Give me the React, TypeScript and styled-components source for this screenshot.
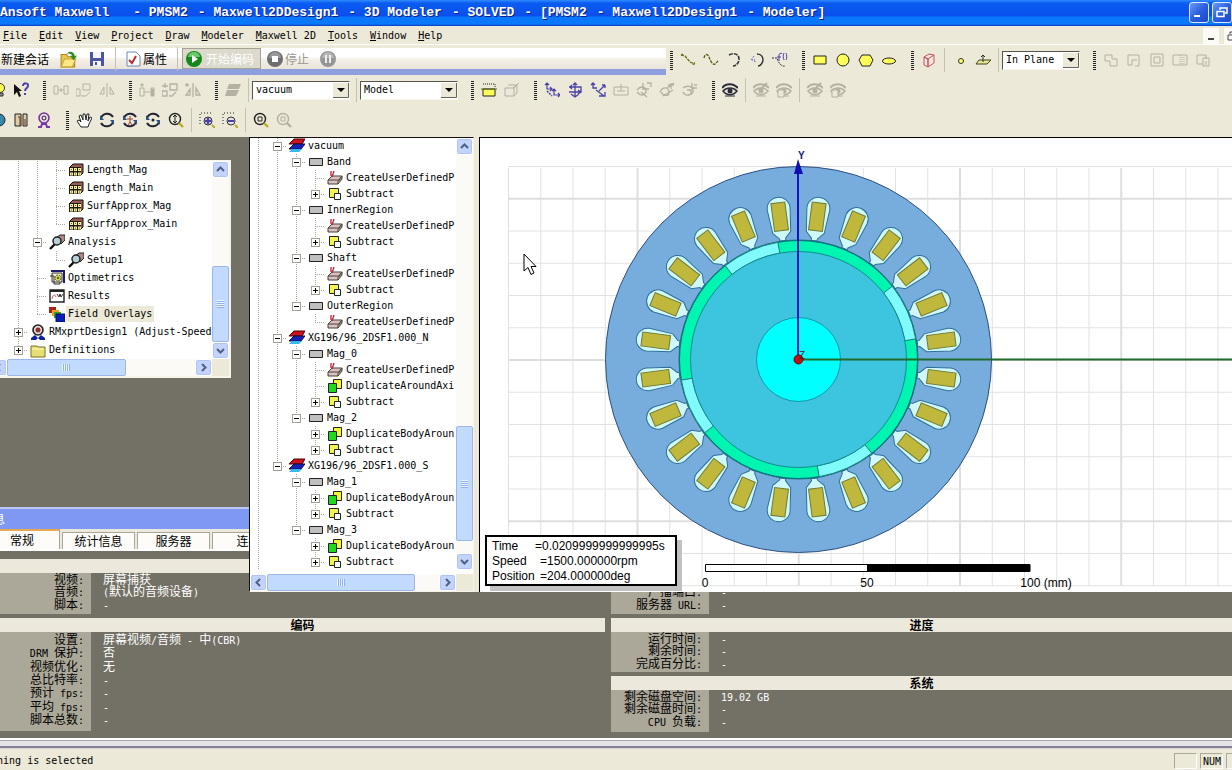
import React from "react";
import styled, { createGlobalStyle, css } from "styled-components";

const mono = `"DejaVu Sans Mono", "Noto Sans CJK SC", monospace`;
const cjk = `"Noto Sans CJK SC", sans-serif`;
const face = "#ece9d8";
const slate = "#737065";

const Global = createGlobalStyle`
  *, *::before, *::after { box-sizing: border-box; }
  body { margin: 0; background: ${face}; color: #000; font: 10px/12px ${mono}; overflow: hidden; }
  button, select { font: inherit; color: inherit; margin: 0; padding: 0; }
  button { background: none; border: 0; }
  ul, dl, dd { margin: 0; padding: 0; list-style: none; }
  svg { display: block; flex: none; }
`;

/* ---------- icons ---------- */

const G = "#b4b1a3";
const P = "#4b42a8";
const Y = "#ffff5a";

const magnifier = (
  <>
    <path d="M1 15l5-5" stroke="#111" strokeWidth="2.4" />
    <path d="M7 4l4-3h5v5l-4 4z" fill="#b08a8a" stroke="#222" />
    <circle cx="8" cy="7" r="4" fill="#b7d0d8" stroke="#222" strokeWidth="1.5" />
  </>
);
const rotate = (
  <>
    <path d="M2 6c2-5 9-6 12-1" stroke="#223" strokeWidth="2" />
    <path d="M14 10c-2 5-9 6-12 1" stroke="#223" strokeWidth="2" />
    <path d="M1 3v5h4zM15 13V8h-4z" fill="#2b5580" />
  </>
);
const eye = (c: string) => (
  <>
    <path d="M0 6c4-5 11-5 16 0" stroke={c} strokeWidth="2" />
    <path d="M1 9c4-4 10-4 14 0-4 5-10 5-14 0z" stroke={c} strokeWidth="1.5" />
    <circle cx="8" cy="9" r="2.5" fill={c} />
    <path d="M3 14h10" stroke={c} />
  </>
);
const zoomGlass = (c: string, tail: string) => (
  <>
    <circle cx="7" cy="7" r="5.5" stroke={c} strokeWidth="1.4" />
    <path d="M11 11l4 4" stroke={tail} strokeWidth="2.4" />
  </>
);
const axes = (
  <>
    <path d="M3 1v6h5M1 3l2-2 2 2M6 5l2 2-2 2" stroke={P} strokeWidth="1.2" />
    <path d="M10 7v6h6M8 9l2-2 2 2M14 11l2 2-2 2" stroke={P} strokeWidth="1.2" />
    <path d="M3 9l5 5" stroke={P} strokeWidth="1.6" strokeDasharray="2 1" />
  </>
);

const icons: Record<string, React.ReactNode> = {
  bulb: <><circle cx="10" cy="6" r="4.5" fill={Y} stroke="#333" /><path d="M9 11h4v3h-4z" fill="#888" stroke="#333" /></>,
  helpCursor: <><path d="M1 2l8 7H6l2 5-2 1-2-5-3 3z" fill="#111" /><path d="M10 4c0-4 6-3 5 0 0 2-3 2-3 5M12 11v2" stroke={P} strokeWidth="2" /></>,
  between: <path d="M1 4h4v8H1zM11 4h4v8h-4zM5 8h6M8 6v4" stroke={G} />,
  step: <path d="M0 7h4v7H0zM7 2h7v6H7zM5 14h5l4-4" stroke={G} />,
  mirror: <path d="M8 1v14M5 5L1 12h4zM11 5v7h4z" stroke={G} />,
  dupLine: <><path d="M1 6h4v8H1zM12 6h3v8h-3zM5 10h6M3 1v4M1 3h4" stroke={G} /><path d="M12 7h3v7h-3z" fill={G} /></>,
  dupStep: <path d="M0 9h5v5H0zM8 2h7v6H8zM3 1v5M0 4h6M7 14h3l4-4" stroke={G} strokeWidth="1.3" />,
  dupMirror: <path d="M8 1v14M5 7L1 13h4zM11 6v7h4zM2 1v4M0 3h4" stroke={G} strokeWidth="1.3" />,
  solids: <path d="M4 2h12l-2 5H2zM2 8h12l-3 6H0z" fill={G} />,
  section: <><path d="M2 2h12v4" stroke="#222" strokeDasharray="1 1" /><path d="M2 7h12v7H2z" fill={Y} stroke="#222" /><path d="M0 7h16" stroke="#5a6a10" /></>,
  sectionOff: <path d="M1 6h9v8H1zM4 3h9l-3 3M13 3v8l-3 3M9 6l6-5" stroke={G} />,
  axA: axes,
  axB: <path d="M8 1v14M2 5h12v5H2M5 3L3 5l2 2M11 8l3 2-3 2M6 3l2-2 2 2M4 12l4 3 4-3" stroke={P} strokeWidth="1.3" />,
  axC: <path d="M3 1v5h4M1 3l2-2 2 2M6 8l8 6M15 3l-6 6M15 3h-3M15 3v3M9 14h6v-4" stroke={P} strokeWidth="1.3" />,
  planeOff: <path d="M1 5h14v8H1zM4 9h8M8 2v7" stroke={G} />,
  csOff: <path d="M1 8c4-5 9-3 9 1s-5 6-9 1M7 1v6h6M11 1h4v4M5 10l6 5" stroke={G} strokeWidth="1.3" />,
  csOff2: <path d="M1 10c3-6 8-5 9 0s-6 4-8 0M8 6l7-5M12 1v6M9 3h6M4 14L14 8" stroke={G} strokeWidth="1.3" />,
  csOff3: <path d="M1 6c4-3 9-2 10 2s-7 8-10 2M5 8h4v5M10 1v5h5M12 3h3" stroke={G} strokeWidth="1.4" />,
  eye: eye("#2c2c38"),
  eyeOff: <>{eye(G)}<path d="M7 8l7-7M5 6l4 4" stroke={G} strokeWidth="2" /></>,
  eyeBox: <>{eye(G)}<path d="M2 8h6v7H2z" fill={face} stroke={G} /></>,
  line: <path d="M1 3l4 1 5 6 5 2M1 3l2-1M13 13l2-3" stroke="#6d6a12" strokeWidth="1.3" strokeDasharray="3 1" />,
  spline: <path d="M1 6c1-5 4-4 5-1s4 9 6 7l3-3" stroke="#5c5916" strokeWidth="1.3" strokeDasharray="3 1" />,
  arc: <path d="M3 3c6-3 10 0 10 4s-3 7-6 7" stroke="#333" strokeWidth="1.6" strokeDasharray="4 1" />,
  arcC: <><path d="M8 2c5 0 6 4 6 6s-2 6-5 6" stroke="#333" strokeWidth="1.4" /><path d="M5 4L2 8h4v2" stroke={P} strokeDasharray="1 1" /></>,
  func: <><path d="M0 6h5c1 4 4 9 8 8" stroke="#333" strokeDasharray="2 1" /><path d="M7 9V3c0-2 3-2 3-1M5 5h4M12 1c-1 2-1 5 0 7M14 1c1 2 1 5 0 7" stroke={P} /></>,
  rect: <path d="M2 4h12v8H2z" fill={Y} stroke="#222" />,
  circle: <circle cx="8" cy="8" r="6" fill={Y} stroke="#222" />,
  hexagon: <path d="M4 3h8l3 5-3 6H4L1 8z" fill={Y} stroke="#222" />,
  ellipse: <ellipse cx="8" cy="9" rx="6.5" ry="3" fill={Y} stroke="#222" />,
  box: <path d="M3 5v8l4 2V7zM3 5l5-3 5 1v8l-6 4V7l6-4M7 7L3 5" stroke="#c8505e" fill="#f6e8e0" />,
  point: <circle cx="9" cy="9" r="2.5" fill={Y} stroke="#333" />,
  plane: <><path d="M4 8h12l-4 4H1z" stroke="#444418" fill="#e8e69a" /><path d="M8 3v7M6 5l2-2 2 2" stroke="#333" /></>,
  unite: <path d="M2 3h7v4h5v7H7V9H2z" stroke={G} />,
  minus: <path d="M2 3h11v11H9M2 3v10h4V8h5" stroke={G} />,
  inter: <path d="M2 2h12v12H2zM5 5h6v6H5z" stroke={G} />,
  split: <><path d="M1 3h14v10H1z" stroke={G} /><path d="M8 3v10M10 5v7M12 5v7" stroke={G} strokeDasharray="1 1" /></>,
  imprint: <path d="M2 3h9v4M2 3v9h6M8 6h6v8H8zM11 9v4" stroke={G} />,
  globe: <><circle cx="9" cy="8" r="6" fill="#3a86a8" stroke="#123" /><path d="M9 3v10" stroke="#9ee" /></>,
  panels: <><path d="M2 2h6v12H2zM10 2h4v12h-4z" stroke="#222" fill="#d8cda4" /><path d="M5 5h2v9M12 7v6" stroke="#703020" /></>,
  user: <><circle cx="8" cy="6" r="5" fill="#f0d8f0" stroke="#703a90" strokeWidth="1.6" /><circle cx="8" cy="6" r="2" stroke="#222" /><path d="M2 15h3l1-3h4l1 3h3" stroke="#7838a8" strokeWidth="2" /></>,
  hand: <path d="M5 15L1 9l2-1 2 2-2-6 2-1 2 5V2h2l1 6 1-6h2l-1 7 2-4 2 1-3 6-1 3z" fill="#fff" stroke="#222" />,
  rotate,
  rotateMan: <>{rotate}<path d="M8 4v6M5 7h6M6 13l2-3 2 3" stroke="#a04030" /></>,
  rotateDot: <>{rotate}<circle cx="8" cy="8" r="1.5" fill="#223" /></>,
  zoomY: <>{zoomGlass("#222", "#b5ad22")}<path d="M7 3v8M5 5l2-2 2 2M5 9l2 2 2-2" stroke="#222" /></>,
  zoomIn: <><path d="M1 12V1h11" stroke="#222" strokeDasharray="1 2" /><circle cx="9" cy="9" r="4" fill="#c9c5ea" stroke="#333" /><path d="M9 6v6M6 9h6" stroke={P} strokeWidth="2" /><path d="M13 13l3 3" stroke="#b5ad22" strokeWidth="2" /></>,
  zoomOut: <><path d="M1 12V1h11" stroke="#222" strokeDasharray="1 2" /><circle cx="9" cy="9" r="4" fill="#e6dff0" stroke="#333" /><path d="M6 9h6" stroke={P} strokeWidth="2" /><path d="M13 13l3 3" stroke="#b5ad22" strokeWidth="2" /></>,
  fit: <>{zoomGlass("#222", "#b5ad22")}<path d="M5 5h4v4H5z" stroke="#222" /></>,
  fitOff: <>{zoomGlass(G, G)}<path d="M5 5h4v4H5z" stroke={G} /></>,
  open: <><path d="M1 4h5l1 2h6v9H1z" fill="#e9c94c" stroke="#b08a20" /><path d="M1 15l3-7h10l-3 7z" fill="#fbe88a" stroke="#c8a838" /><path d="M6 3c3-3 7-1 7 2h2l-3 4-3-4h2c-1-2-3-2-5-2z" fill="#2c8a2a" /></>,
  save: <><path d="M1 1h14v14H1z" fill="#4a55a5" /><path d="M4 1h8v6H4zM4 10h8v5H4z" fill="#f4f4fa" /><path d="M6 11h2v3H6z" fill="#4a55a5" /></>,
  doc: <><path d="M2 1h9l4 4v10H2z" fill="#fff" stroke="#6a86b8" /><path d="M4 9l3 3 4-7" stroke="#b83030" strokeWidth="2" /></>,
  play: <><circle cx="8" cy="8" r="8" fill="#16881b" /><path d="M2 6a6 5 0 0 1 12 0z" fill="#6cc86a" /><path d="M6 4l6 4-6 4z" fill="#fff" /></>,
  stop: <><circle cx="8" cy="8" r="8" fill="#6e6e6e" /><path d="M2 7a6 6 0 0 1 12 0z" fill="#989898" /><path d="M5 5h6v6H5z" fill="#fff" /></>,
  pause: <><circle cx="8" cy="8" r="8" fill="#969696" /><path d="M2 7a6 6 0 0 1 12 0z" fill="#b4b4b4" /><path d="M6 4v8M10 4v8" stroke="#eee" strokeWidth="2" /></>,
  vars: (
    <>
      <path d="M2 5l3-3h10v9l-2 2z" fill="#9a5a50" stroke="#111" />
      <path d="M1 5h12v9H1z" fill="#1c1a10" />
      {[2, 6, 10].map((x) => [6, 10.5].map((y) => (
        <g key={`${x}-${y}`}><rect x={x} y={y} width="3" height="3" fill="#f6efa4" /><rect x={x + 1} y={y + 1} width="1" height="1" fill="#6a5a20" /></g>
      )))}
    </>
  ),
  analysis: magnifier,
  setup: magnifier,
  optim: <><path d="M2 1h13v12" stroke="#1b1b6a" strokeWidth="2" /><path d="M3 3h10v9H3zM1 6h4v8h6v-2" fill="#f3f0d0" stroke="#333" /><circle cx="9" cy="8" r="3" fill="#d8d840" stroke="#555" strokeDasharray="2 1" /><circle cx="9" cy="8" r="1" fill="#333" /></>,
  results: <><path d="M1 2h14v12H1z" fill="#fff" stroke="#222" strokeWidth="1.4" /><path d="M1 3h14" stroke="#222" strokeWidth="2" /><path d="M3 11c1-5 3-5 4-2" stroke="#c05050" /><path d="M8 6l2 3 1-3 1 3 2-3" stroke="#333" /></>,
  overlays: <><path d="M0 1h7v6H0z" fill="#b02010" /><path d="M3 4h7v6H3z" fill="#e8a020" /><path d="M5 6h7v6H5z" fill="#30a030" /><path d="M7 8h9v8H7z" fill="#0a20b8" stroke="#051060" /></>,
  design: <><circle cx="8" cy="6" r="5" fill="#e8d8d8" stroke="#222" strokeWidth="1.6" /><circle cx="8" cy="6" r="2.5" fill="#8a3030" /><path d="M1 16v-2l4-3 3 3 3-3 4 3v2h-5l-2-2-2 2z" fill="#10209a" /></>,
  folder: <><path d="M1 4h6l1 1h7v10H1z" fill="#e6e070" stroke="#77722a" /><path d="M2 7h12" stroke="#fffcc0" /></>,
  material: <><path d="M5 1h11l-3 5H0z" fill="#d01020" stroke="#400" /><path d="M5 6h11l-4 5H0z" fill="#1a20c0" stroke="#113" /><path d="M3 11h10l-3 3H0z" fill="#38b8f0" /></>,
  body: <path d="M1.500 4.500h13v7H1.500z" fill="#c0c0c0" stroke="#222" />,
  create: <><path d="M1 10l4-4h10l-4 5v3H1zM1 10h10" fill="#d8c0c4" stroke="#443" /><path d="M11 11l4-5v3l-4 5" fill="#a08888" stroke="#443" /><path d="M4 1v5M7 1L5 7" stroke="#c03040" strokeWidth="1.4" /></>,
  subtract: <><path d="M2.500 2.500h9v9H2.500z" fill="#f4f450" stroke="#222" /><path d="M7.500 7.500h6v6H7.500z" fill="#fff" stroke="#222" /></>,
  duplicate: <><path d="M6.500 1.500h8v9H6.500z" fill="#f4f430" stroke="#222" /><path d="M1.500 5.500h8v9H1.500z" fill="#20d820" stroke="#222" /></>,
};

const Icon = ({ name, size = 16 }: { name: string; size?: number }) => (
  <svg width={size} height={size} viewBox="0 0 16 16" fill="none" aria-hidden="true">
    {icons[name]}
  </svg>
);

/* ---------- frame ---------- */

const Page = styled.div`
  display: flex;
  flex-direction: column;
  min-height: 100vh;
  overflow: hidden;
`;

const TitleBar = styled.header`
  display: flex;
  align-items: center;
  gap: 10px;
  height: 26px;
  color: #fff;
  font: bold 13px/26px "Liberation Mono", monospace;
  white-space: nowrap;
  text-shadow: 1px 1px 0 #0a2080;
  background: linear-gradient(#2f8bff 0, #0a5cf0 12%, #0a4fee 60%, #0a78fb 66%, #0a78fb 92%, #0a3cc0 100%);
`;
const AppName = styled.span`
  padding-right: 14px;
`;
const WindowButtons = styled.div`
  display: flex;
  gap: 3px;
  margin: 0 0 2px auto;
`;
const WindowButton = styled.button`
  display: grid;
  place-items: center;
  width: 20px;
  height: 21px;
  border: 1px solid #dfe8ff;
  border-radius: 3px;
  background: linear-gradient(135deg, #6f9af5, #2a5fe0 50%, #1a4ac8);
`;

const MenuBar = styled.nav`
  display: flex;
  align-items: center;
  gap: 12px;
  height: 19px;
  padding: 1px 0 0 3px;
  border-bottom: 1px solid #fff;
`;
const MenuItem = styled.button`
  &::first-letter {
    text-decoration: underline;
  }
`;
const ChildButtons = styled.div`
  display: flex;
  gap: 5px;
  margin: 0 -8px 0 auto;
`;
const ChildButton = styled.button`
  display: grid;
  place-items: center;
  width: 16px;
  height: 16px;
  background: #fbfaf5;
`;

/* ---------- toolbars ---------- */

const Toolbars = styled.div`
  padding-bottom: 2px;
`;
const ToolRow = styled.div<{ $bleed?: boolean }>`
  display: flex;
  align-items: center;
  height: 30px;
  margin-left: ${(p) => (p.$bleed ? "-14px" : "0")};
`;
const ToolButton = styled.button`
  display: grid;
  place-items: center;
  flex: none;
  width: 23px;
  height: 23px;
`;
const Grip = styled.span<{ $near?: boolean }>`
  flex: none;
  width: 3px;
  height: 19px;
  margin: 0 3px 0 ${(p) => (p.$near ? "4px" : "11px")};
  background: repeating-linear-gradient(#222 0 1px, transparent 1px 2px);
`;
const Divider = styled.span`
  flex: none;
  width: 1px;
  height: 24px;
  margin: 0 3px 0 4px;
  background: #c5c2b2;
`;
const SelectBox = styled.span<{ $width: number }>`
  position: relative;
  flex: none;
  width: ${(p) => p.$width}px;
  height: 19px;
  margin-right: 2px;
  select {
    appearance: none;
    width: 100%;
    height: 100%;
    padding-left: 3px;
    border: 1px solid;
    border-color: #55534a #f8f6ec #f8f6ec #55534a;
    border-radius: 0;
    background: #fff;
  }
  svg {
    position: absolute;
    top: 2px;
    right: 1px;
    pointer-events: none;
  }
`;

const Choice = ({ label, value, width }: { label: string; value: string; width: number }) => (
  <SelectBox $width={width}>
    <select aria-label={label} defaultValue={value}>
      <option>{value}</option>
    </select>
    <svg width="16" height="15" aria-hidden="true">
      <path d="M0 0h16v15H0z" fill={face} />
      <path d="M0 14.500h15.500V0" fill="none" stroke="#66645a" />
      <path d="M4 5h8l-4 4z" fill="#000" />
    </svg>
  </SelectBox>
);

const Tools = ({ names }: { names: string[] }) => (
  <>
    {names.map((n, i) =>
      n === "|" ? <Divider key={i} /> : n === "::" ? <Grip key={i} /> : (
        <ToolButton key={i} aria-label={n}><Icon name={n} /></ToolButton>
      )
    )}
  </>
);

const SessionBar = styled.div`
  display: flex;
  align-items: center;
  align-self: flex-end;
  gap: 1px;
  flex: none;
  width: 666px;
  height: 27px;
  font: 12px/18px ${cjk};
  border-bottom: 6px solid #8e9fdf;
  background: linear-gradient(#fff 0 40%, #f3efe6 55%, #e9e4da 100%);
`;
const SessionButton = styled.button<{ $disabled?: boolean }>`
  display: flex;
  align-items: center;
  gap: 2px;
  height: 20px;
  padding: 0 5px;
  white-space: nowrap;
  color: ${(p) => (p.$disabled ? "#9b988c" : "#000")};
  &:first-child {
    padding-left: 1px;
  }
`;
const StartButton = styled(SessionButton)`
  width: 79px;
  height: 21px;
  padding: 0 3px;
  gap: 4px;
  color: #fff;
  border: 1px solid #a5a296;
  background: #dcd9cd;
`;

/* ---------- scroll bars ---------- */

const Track = styled.div<{ $dir: "row" | "column" }>`
  display: flex;
  flex-direction: ${(p) => p.$dir};
  flex: none;
  ${(p) => (p.$dir === "row" ? "height: 17px;" : "width: 17px;")}
  background: #fbfaf6;
`;
const Arrow = styled.button`
  display: grid;
  place-items: center;
  flex: none;
  width: 17px;
  height: 17px;
  border: 1px solid #fff;
  border-radius: 3px;
  background: #c3d3fb;
  box-shadow: inset 0 0 0 1px #b0c4f2;
`;
const Space = styled.span<{ $grow: number }>`
  flex: ${(p) => p.$grow} 1 0;
`;
const Thumb = styled.span<{ $grow: number; $dir: "row" | "column" }>`
  display: grid;
  place-items: center;
  flex: ${(p) => p.$grow} 1 0;
  border: 1px solid #9db6ea;
  border-radius: 2px;
  background: #c2dafd;
  &::after {
    content: "";
    ${(p) =>
      p.$dir === "row"
        ? css`width: 8px; height: 7px; background: repeating-linear-gradient(90deg, #eef4fe 0 1px, #8cb0f0 1px 2px);`
        : css`width: 7px; height: 8px; background: repeating-linear-gradient(#eef4fe 0 1px, #8cb0f0 1px 2px);`}
  }
`;
const turns = { left: 0, up: 90, right: 180, down: 270 };
const Chevron = ({ to }: { to: keyof typeof turns }) => (
  <Arrow aria-label={`Scroll ${to}`}>
    <svg width="9" height="9" viewBox="0 0 9 9" aria-hidden="true">
      <path d="M6 1L2.500 4.500 6 8" fill="none" stroke="#4d6185" strokeWidth="2" transform={`rotate(${turns[to]} 4.500 4.500)`} />
    </svg>
  </Arrow>
);
const ScrollBar = ({ dir, parts }: { dir: "row" | "column"; parts: [number, number, number] }) => (
  <Track $dir={dir}>
    <Chevron to={dir === "row" ? "left" : "up"} />
    <Space $grow={parts[0]} />
    <Thumb $dir={dir} $grow={parts[1]} />
    <Space $grow={parts[2]} />
    <Chevron to={dir === "row" ? "right" : "down"} />
  </Track>
);

/* ---------- trees ---------- */

const List = styled.ul`
  flex: 1;
  min-width: 0;
  overflow: hidden;
`;
const Node = styled.li<{ $height: number }>`
  display: flex;
  align-items: center;
  height: ${(p) => p.$height}px;
  white-space: nowrap;
`;
const Rail = styled.span<{ $kind: string }>`
  display: grid;
  place-items: center;
  flex: none;
  width: 19px;
  height: 100%;
  ${(p) => {
    const v = "repeating-linear-gradient(#aaa79c 0 1px, transparent 1px 2px)";
    const h = "repeating-linear-gradient(90deg, #aaa79c 0 1px, transparent 1px 2px)";
    if (p.$kind === " ") return "";
    if (p.$kind === "|") return `background: ${v} 9px 0 / 1px 100% no-repeat;`;
    const half = p.$kind === "L" || p.$kind === "p";
    return `background: ${v} 9px 0 / 1px ${half ? "50%" : "100%"} no-repeat, ${h} 9px 50% / 10px 1px no-repeat;`;
  }}
`;
const Expander = styled.button`
  width: 9px;
  height: 9px;
  border: 1px solid #a3a095;
  background: #fff;
`;
const NodeIcon = styled.span`
  display: grid;
  place-items: center;
  flex: none;
  width: 19px;
`;
const NodeLabel = styled.span<{ $on?: boolean }>`
  padding: 2px 2px;
  background: ${(p) => (p.$on ? "#ece9d8" : "none")};
`;

type Row = [rails: string, icon: string, label: string, on?: boolean];

/* Rails: "|" line, " " gap, T tee, L last, + / - expander, p = "+" on a last child, m = "-" on a last child */
const Tree = ({ rows, height, label }: { rows: Row[]; height: number; label: string }) => (
  <List aria-label={label}>
    {rows.map(([rails, icon, text, on], i) => (
      <Node key={i} $height={height}>
        {rails.split("").map((k, j) => (
          <Rail key={j} $kind={k === "m" ? "p" : k}>
            {"+-pm".includes(k) && (
              <Expander aria-label={"+p".includes(k) ? "Expand" : "Collapse"}>
                <svg width="7" height="7" aria-hidden="true">
                  <path d={"+p".includes(k) ? "M1 3.500h5M3.500 1v5" : "M1 3.500h5"} stroke="#000" />
                </svg>
              </Expander>
            )}
          </Rail>
        ))}
        <NodeIcon><Icon name={icon} /></NodeIcon>
        <NodeLabel $on={on}>{text}</NodeLabel>
      </Node>
    ))}
  </List>
);

const projectRows: Row[] = [
  ["||T", "vars", "Length_Mag"],
  ["||T", "vars", "Length_Main"],
  ["||T", "vars", "SurfApprox_Mag"],
  ["||L", "vars", "SurfApprox_Main"],
  ["|-", "analysis", "Analysis"],
  ["||L", "setup", "Setup1"],
  ["|T", "optim", "Optimetrics"],
  ["|T", "results", "Results"],
  ["|L", "overlays", "Field Overlays", true],
  ["+", "design", "RMxprtDesign1 (Adjust-Speed"],
  ["p", "folder", "Definitions"],
];

const modelRows: Row[] = [
  ["|-", "material", "vacuum"],
  ["||-", "body", "Band"],
  ["|||T", "create", "CreateUserDefinedP"],
  ["|||p", "subtract", "Subtract"],
  ["||-", "body", "InnerRegion"],
  ["|||T", "create", "CreateUserDefinedP"],
  ["|||p", "subtract", "Subtract"],
  ["||-", "body", "Shaft"],
  ["|||T", "create", "CreateUserDefinedP"],
  ["|||p", "subtract", "Subtract"],
  ["||m", "body", "OuterRegion"],
  ["|| L", "create", "CreateUserDefinedP"],
  ["|-", "material", "XG196/96_2DSF1.000_N"],
  ["||-", "body", "Mag_0"],
  ["|||T", "create", "CreateUserDefinedP"],
  ["|||T", "duplicate", "DuplicateAroundAxi"],
  ["|||p", "subtract", "Subtract"],
  ["||m", "body", "Mag_2"],
  ["|| +", "duplicate", "DuplicateBodyAroun"],
  ["|| p", "subtract", "Subtract"],
  ["|m", "material", "XG196/96_2DSF1.000_S"],
  ["| -", "body", "Mag_1"],
  ["| |+", "duplicate", "DuplicateBodyAroun"],
  ["| |p", "subtract", "Subtract"],
  ["| m", "body", "Mag_3"],
  ["|  +", "duplicate", "DuplicateBodyAroun"],
  ["|  p", "subtract", "Subtract"],
];

/* ---------- workspace ---------- */

const Desktop = styled.div`
  display: grid;
  grid-template-columns: minmax(0, 1fr);
  flex: 1;
  background: ${slate};
`;
const Workspace = styled.main`
  display: flex;
  grid-area: 1 / 1;
  align-self: start;
  z-index: 1;
  pointer-events: none;
  & > * {
    pointer-events: auto;
  }
`;
const ProjectDock = styled.section`
  align-self: flex-start;
  flex: none;
  width: 231px;
  margin: 23px 18px 0 0;
  border: solid #f6f4ea;
  border-width: 1px 2px 2px 0;
  background: #fff;
`;
const Split = styled.div`
  display: flex;
`;
const ProjectPane = styled(Split)`
  & > ul {
    padding-left: 9px;
  }
`;
const HorizontalEdge = styled.div<{ $bleed?: boolean }>`
  display: grid;
  grid-template-columns: minmax(0, 1fr) 17px;
  margin-left: ${(p) => (p.$bleed ? "-10px" : "0")};
  background: ${face};
`;
const ModelDock = styled.section`
  flex: none;
  width: 225px;
  border: 1px solid #111;
  border-right-color: #f6f4ea;
  border-bottom-color: #f6f4ea;
  background: #fff;
`;
const ModelPane = styled(Split)`
  padding-bottom: 4px;
  & > ul {
    margin-left: -1px;
  }
`;
const Viewport = styled.section`
  position: relative;
  flex: 1;
  min-width: 0;
  border: solid #000;
  border-width: 1px 0 0 1px;
  background: #fff;
  box-shadow: -5px 0 0 ${face};
  margin-left: 5px;
`;
const Scene = styled.svg`
  width: 100%;
  height: 100%;
  font: 12px "Liberation Sans", sans-serif;
`;
const InfoBox = styled.dl`
  position: absolute;
  left: 5px;
  bottom: 6px;
  width: 192px;
  padding: 2px 5px 0;
  border: 2px solid #000;
  background: #fff;
  box-shadow: 5px 5px 0 #c2c2c2;
  font: 12px/15px "Liberation Sans", sans-serif;
  div {
    display: flex;
    white-space: pre;
  }
`;
const Term = styled.dt<{ $short?: boolean }>`
  width: ${(p) => (p.$short ? 43 : 48)}px;
`;

const CX = 318.5;
const CY = 221.5;
const polar = (r: number, deg: number) => {
  const a = (deg * Math.PI) / 180;
  return `${(r * Math.sin(a)).toFixed(2)} ${(-r * Math.cos(a)).toFixed(2)}`;
};
const sector = (a: number, b: number) =>
  `M${polar(119, a)}A119 119 0 0 1 ${polar(119, b)}L${polar(108, b)}A108 108 0 0 0 ${polar(108, a)}z`;

const Motor = () => (
  <g transform={`translate(${CX} ${CY})`} strokeWidth="1">
    <circle r="193" fill="#76addc" stroke="#2d4f80" />
    {Array.from({ length: 24 }, (_, i) => (
      <g key={i} transform={`rotate(${7.5 + i * 15})`}>
        <path d="M-3-120V-122L-9-128-11.500-152A11.500 11.500 0 0 1 11.500-152L9-128 3-122V-120z" fill="#cff8f8" stroke="#2f6f9c" />
        <path d="M-7-158H7V-130H-7z" fill="#bfb83c" stroke="#6e7a35" />
      </g>
    ))}
    <circle r="120" fill="#15737f" />
    <circle r="119" fill="#00f5b0" stroke="#0f6f80" />
    {[-38, 52, 142, 232].map((a) => (
      <path key={a} d={sector(a, a + 28)} fill="#80fbfb" stroke="#1c7c80" />
    ))}
    <circle r="108" fill="#3dc4df" stroke="#168a90" />
    <circle r="42" fill="#00ffff" stroke="#1697a8" />
  </g>
);

const Drawing = () => (
  <Scene role="img" aria-label="Motor cross section">
    {Array.from({ length: 50 }, (_, i) => (
      <line key={`v${i}`} x1={28.5 + i * 32.25} x2={28.5 + i * 32.25} y1="30" y2="448"
        stroke={i % 5 === 4 ? "#dedede" : "#e2e2e2"} strokeWidth={i % 5 === 4 ? 2 : 1} />
    ))}
    {Array.from({ length: 14 }, (_, i) => (
      <line key={`h${i}`} x1="28" x2="100%" y1={28.5 + i * 32.25} y2={28.5 + i * 32.25}
        stroke={i % 5 === 1 ? "#dedede" : "#e2e2e2"} strokeWidth={i % 5 === 1 ? 2 : 1} />
    ))}
    <Motor />
    <line x1={CX} x2="100%" y1={CY} y2={CY} stroke="#1f6b2c" strokeWidth="2" />
    <path d={`M318 ${CY}V34`} stroke="#1414c4" strokeWidth="2" />
    <path d="M318 21L314 36h9z" fill="#1010b0" />
    <text x="318" y="21" fill="#14147a" fontSize="10" fontWeight="bold">Y</text>
    <circle cx={CX} cy={CY} r="4.500" fill="#b81414" stroke="#601010" />
    <text x="319" y="221" fill="#5a1020" fontSize="10">Z</text>
    <path d="M44 116V133L48 129.500 51 136.500 54 135 51 128.500H56z" fill="#fff" stroke="#000" />
    <path d="M225.500 426.500H550V433.500H225.500z" fill="#fff" stroke="#000" />
    <path d="M387 426H550V434H387z" fill="#000" />
    <g textAnchor="middle">
      <text x="225" y="449">0</text>
      <text x="387" y="449">50</text>
      <text x="566" y="449">100 (mm)</text>
    </g>
  </Scene>
);

/* ---------- encoder window ---------- */

const Encoder = styled.section`
  grid-area: 1 / 1;
  padding-top: 370px;
  font: 12px/12px ${cjk};
`;
const EncoderTitle = styled.div`
  height: 22px;
  color: #fff;
  line-height: 20px;
  border-top: 2px solid #b9c6f4;
  background: #7f98f4;
  span {
    margin-left: -19px;
  }
`;
const Tabs = styled.div`
  display: flex;
  gap: 2px;
  align-items: flex-end;
  height: 22px;
  border-bottom: 2px solid #fff;
  background: #ebe8dd;
`;
const Tab = styled.button<{ $on?: boolean }>`
  height: ${(p) => (p.$on ? 20 : 17)}px;
  width: ${(p) => (p.$on ? 80 : 73)}px;
  margin-left: ${(p) => (p.$on ? "-20px" : "0")};
  padding-left: ${(p) => (p.$on ? "4px" : "0")};
  line-height: 14px;
  border: 1px solid #a9a69a;
  border-bottom: 0;
  border-top: ${(p) => (p.$on ? "2px solid #e8a850" : "1px solid #a9a69a")};
  background: #fdfcf9;
`;
const Columns = styled.div`
  display: grid;
  grid-template-columns: 605px minmax(0, 1fr);
  gap: 6px;
  padding: 8px 0 6px;
`;
const Stack = styled.div`
  display: flex;
  flex-direction: column;
  gap: 4px;
`;
const Heading = styled.h2`
  height: 14px;
  margin: 0;
  font: bold 12px/14px ${cjk};
  text-align: center;
  background: #ece8db;
`;
const Facts = styled.dl<{ $label: number; $height: number; $end: number }>`
  display: grid;
  grid-auto-rows: minmax(0, 1fr);
  height: ${(p) => p.$height}px;
  padding: 0 0 ${(p) => p.$end}px;
  background: linear-gradient(90deg, #aca899 ${(p) => p.$label}px, transparent ${(p) => p.$label}px);
  div {
    display: grid;
    grid-template-columns: ${(p) => p.$label}px minmax(0, 1fr);
    align-items: center;
    white-space: pre;
  }
  dt,
  dd {
    height: 12px;
  }
  dt {
    padding-right: 7px;
    text-align: right;
  }
  dd {
    padding-left: 12px;
    color: #fff;
  }
`;
const Latin = styled.span`
  font: 10px/10px ${mono};
`;

const mixed = (s: string) =>
  s.split(/([\x20-\x7e]+)/).filter(Boolean).map((t, i) => (/^[\x20-\x7e]/.test(t) ? <Latin key={i}>{t}</Latin> : t));

const Panel = ({ title, rows, label, height, end }: {
  title?: string; rows: [string, string][]; label: number; height: number; end: number;
}) => (
  <section>
    <Heading>{title}</Heading>
    <Facts $label={label} $height={height} $end={end}>
      {rows.map(([k, v]) => (
        <div key={k}><dt>{mixed(k)}</dt><dd>{mixed(v)}</dd></div>
      ))}
    </Facts>
  </section>
);

/* ---------- status bar ---------- */

const StatusBar = styled.footer`
  display: flex;
  align-items: center;
  justify-content: space-between;
  height: 32px;
  padding-top: 14px;
  background: linear-gradient(#fff 0 2px, #a9a4a8 2px 3px, #e6e3e6 3px 8px, #85809a 8px 10px, #d8d5d0 10px 11px, ${face} 11px);
  p {
    margin: 0 0 0 -21px;
  }
`;
const Cells = styled.div`
  display: flex;
  gap: 3px;
  margin-right: -17px;
`;
const Cell = styled.span`
  width: 23px;
  height: 16px;
  padding: 2px;
  border: 1px solid;
  border-color: #aca899 #fff #fff #aca899;
`;

export default function App() {
  return (
    <Page>
      <Global />
      <TitleBar>
        <AppName>Ansoft Maxwell</AppName>
        {["- PMSM2", "- Maxwell2DDesign1", "- 3D Modeler", "- SOLVED", "- [PMSM2", "- Maxwell2DDesign1", "- Modeler]"].map((t, i) => (
          <span key={i}>{t}</span>
        ))}
        <WindowButtons>
          <WindowButton aria-label="Minimize">
            <svg width="12" height="12"><path d="M1 9h6v2H1z" fill="#fff" /></svg>
          </WindowButton>
          <WindowButton aria-label="Restore">
            <svg width="12" height="12" fill="none" stroke="#fff"><path d="M4 4V2h7v5H9M1 5.500h7v5H1z" strokeWidth="1.500" /></svg>
          </WindowButton>
        </WindowButtons>
      </TitleBar>
      <MenuBar>
        {["File", "Edit", "View", "Project", "Draw", "Modeler", "Maxwell 2D", "Tools", "Window", "Help"].map((m) => (
          <MenuItem key={m}>{m}</MenuItem>
        ))}
        <ChildButtons>
          <ChildButton aria-label="Minimize document">
            <svg width="10" height="10"><path d="M2 7h6v2H2z" fill="#444" /></svg>
          </ChildButton>
          <ChildButton aria-label="Restore document">
            <svg width="10" height="10" fill="none" stroke="#444"><path d="M3 3V1h6v5H7M1 4h6v5H1z" /></svg>
          </ChildButton>
        </ChildButtons>
      </MenuBar>

      <Toolbars>
        <ToolRow>
          <SessionBar>
            <SessionButton>新建会话</SessionButton>
            <SessionButton aria-label="打开"><Icon name="open" size={18} /></SessionButton>
            <SessionButton aria-label="保存"><Icon name="save" /></SessionButton>
            <Divider />
            <SessionButton><Icon name="doc" />属性</SessionButton>
            <Divider />
            <StartButton><Icon name="play" />开始编码</StartButton>
            <SessionButton $disabled><Icon name="stop" />停止</SessionButton>
            <SessionButton $disabled aria-label="暂停"><Icon name="pause" /></SessionButton>
          </SessionBar>
          <Grip $near />
          <Tools names={["line", "spline", "arc", "arcC", "func", "::", "rect", "circle", "hexagon", "ellipse", "::", "box", "|", "point", "plane", "|"]} />
          <Choice label="Movement mode" value="In Plane" width={78} />
          <Tools names={["::", "unite", "minus", "inter", "split", "imprint"]} />
        </ToolRow>
        <ToolRow $bleed>
          <Tools names={["bulb", "helpCursor", "::", "between", "step", "mirror", "::", "dupLine", "dupStep", "dupMirror", "::", "solids", "|"]} />
          <Choice label="Material" value="vacuum" width={98} />
          <Divider />
          <Choice label="Model type" value="Model" width={98} />
          <Tools names={["::", "section", "sectionOff", "::", "axA", "axB", "axC", "planeOff", "csOff", "csOff2", "csOff3", "::", "eye", "|", "eyeOff", "eyeBox", "|", "eyeOff", "eyeBox"]} />
        </ToolRow>
        <ToolRow $bleed>
          <Tools names={["globe", "panels", "user", "::", "hand", "rotate", "rotateMan", "rotateDot", "zoomY", "|", "zoomIn", "zoomOut", "|", "fit", "fitOff"]} />
        </ToolRow>
      </Toolbars>

      <Desktop>
        <Workspace>
          <ProjectDock>
            <ProjectPane>
              <Tree rows={projectRows} height={18} label="Project" />
              <ScrollBar dir="column" parts={[90, 76, 0]} />
            </ProjectPane>
            <HorizontalEdge $bleed>
              <ScrollBar dir="row" parts={[0, 118, 70]} />
            </HorizontalEdge>
          </ProjectDock>
          <ModelDock>
            <ModelPane>
              <Tree rows={modelRows} height={16} label="Model" />
              <ScrollBar dir="column" parts={[276, 115, 12]} />
            </ModelPane>
            <HorizontalEdge>
              <ScrollBar dir="row" parts={[0, 148, 24]} />
            </HorizontalEdge>
          </ModelDock>
          <Viewport>
            <Drawing />
            <InfoBox>
              <div><Term $short>Time</Term><dd>=0.0209999999999995s</dd></div>
              <div><Term>Speed</Term><dd>=1500.000000rpm</dd></div>
              <div><Term>Position</Term><dd>=204.000000deg</dd></div>
            </InfoBox>
          </Viewport>
        </Workspace>

        <Encoder>
          <EncoderTitle><span>信息</span></EncoderTitle>
          <Tabs>
            <Tab $on>常规</Tab>
            <Tab>统计信息</Tab>
            <Tab>服务器</Tab>
            <Tab>连接</Tab>
          </Tabs>
          <Columns>
            <Stack>
              <Panel label={91} height={41} end={4} rows={[["视频:", "屏幕捕获"], ["音频:", "(默认的音频设备)"], ["脚本:", "-"]]} />
              <Panel title="编码" label={91} height={99} end={5}
                rows={[["设置:", "屏幕视频/音频 - 中(CBR)"], ["DRM 保护:", "否"], ["视频优化:", "无"], ["总比特率:", "-"], ["预计 fps:", "-"], ["平均 fps:", "-"], ["脚本总数:", "-"]]} />
            </Stack>
            <Stack>
              <Panel label={98} height={41} end={4} rows={[["服务器:", "-"], ["广播端口:", "-"], ["服务器 URL:", "-"]]} />
              <Panel title="进度" label={98} height={40} end={3} rows={[["运行时间:", "-"], ["剩余时间:", "-"], ["完成百分比:", "-"]]} />
              <Panel title="系统" label={98} height={42} end={5} rows={[["剩余磁盘空间:", "19.02 GB"], ["剩余磁盘时间:", "-"], ["CPU 负载:", "-"]]} />
            </Stack>
          </Columns>
        </Encoder>
      </Desktop>

      <StatusBar>
        <p>Nothing is selected</p>
        <Cells><Cell /><Cell>NUM</Cell><Cell /></Cells>
      </StatusBar>
    </Page>
  );
}
